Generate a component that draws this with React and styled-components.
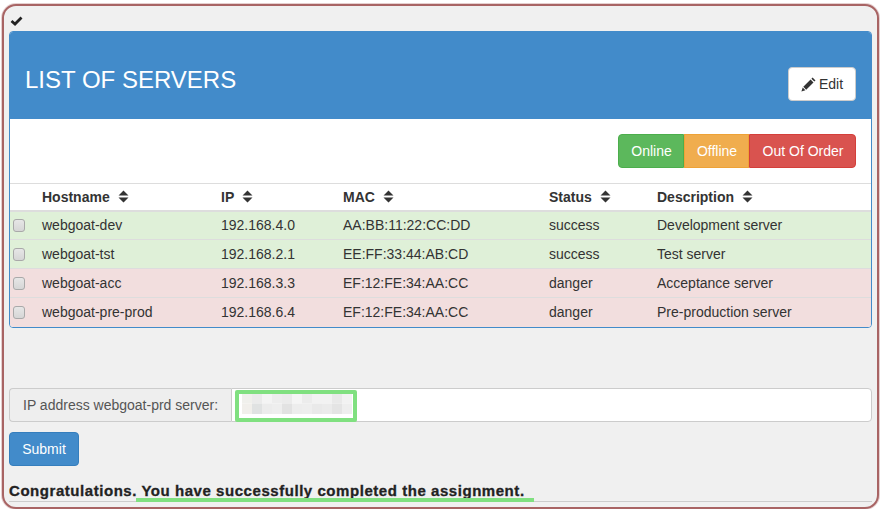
import React from 'react';
import styled, { createGlobalStyle } from 'styled-components';

const GlobalStyle = createGlobalStyle`
  html, body {
    margin: 0;
    padding: 0;
    background: #fff;
  }
  * {
    box-sizing: border-box;
  }
`;

const Frame = styled.div`
  position: relative;
  width: 877px;
  height: 505px;
  margin: 4px 0 0 2px;
  padding: 0 5px;
  border: 2px solid #a86464;
  border-radius: 14px;
  box-shadow: 0 0 0 1px rgba(168, 100, 100, 0.3);
  background: #f0f0f0;
  color: #333;
  font-family: 'Liberation Sans', Arial, sans-serif;
  font-size: 14px;
  line-height: 20px;
`;

const CheckRow = styled.div`
  height: 25px;
  padding: 10px 0 0 1px;
  svg {
    display: block;
  }
`;

const Panel = styled.div`
  background: #fff;
  border: 1px solid #428bca;
  border-radius: 4px;
  overflow: hidden;
`;

const PanelHeader = styled.div`
  display: flex;
  justify-content: space-between;
  align-items: flex-end;
  height: 87px;
  padding: 0 15px 18px 15px;
  background: #428bca;
`;

const Title = styled.h3`
  margin: 0 0 8px;
  color: #fff;
  font-size: 24px;
  font-weight: 400;
  line-height: 26px;
`;

const EditButton = styled.button`
  display: flex;
  align-items: center;
  justify-content: center;
  gap: 3px;
  width: 68px;
  height: 34px;
  padding: 0;
  background: #fff;
  border: 1px solid #ccc;
  border-radius: 4px;
  color: #333;
  font: inherit;
`;

const Toolbar = styled.div`
  display: flex;
  justify-content: flex-end;
  padding: 15px 15px 15px 0;
`;

const FilterButton = styled.button`
  width: ${props => props.$width}px;
  height: 34px;
  padding: 0 0 0 1px;
  background: ${props => props.$color};
  border: 1px solid ${props => props.$edge};
  color: #fff;
  font: inherit;
  &:first-child {
    border-radius: 4px 0 0 4px;
  }
  &:last-child {
    border-radius: 0 4px 4px 0;
  }
`;

const Table = styled.table`
  width: 100%;
  border-collapse: collapse;
  table-layout: fixed;
`;

const HeadCell = styled.th`
  width: ${props => props.$width};
  height: 27px;
  padding: 0 5px;
  border-top: 1px solid #ddd;
  border-bottom: 2px solid #ddd;
  text-align: left;
  font-weight: 700;
  white-space: nowrap;
  svg {
    margin-left: 8px;
    vertical-align: -1px;
  }
`;

const Row = styled.tr`
  background: ${props => (props.$status === 'success' ? '#dff0d8' : '#f2dede')};
`;

const Cell = styled.td`
  height: 29px;
  padding: 0 5px;
  border-top: 1px solid #ddd;
  white-space: nowrap;
`;

const CheckCell = styled(Cell)`
  padding: 0 0 0 3px;
`;

const FakeCheckbox = styled.span`
  display: block;
  width: 12px;
  height: 13px;
  border: 1px solid #a9a9a9;
  border-radius: 3px;
  background: linear-gradient(#e6e6e6, #d6d6d6);
`;

const InputGroup = styled.div`
  display: flex;
  height: 34px;
  margin-top: 60px;
`;

const Addon = styled.span`
  display: flex;
  align-items: center;
  width: 222px;
  padding-left: 13px;
  background: #eee;
  border: 1px solid #ccc;
  border-right: 0;
  border-radius: 4px 0 0 4px;
  color: #555;
`;

const FieldBox = styled.div`
  position: relative;
  flex: 1;
  background: #fff;
  border: 1px solid #ccc;
  border-radius: 0 4px 4px 0;
`;

const Mosaic = styled.svg`
  position: absolute;
  left: 10px;
  top: 4px;
`;

const Highlight = styled.div`
  position: absolute;
  left: 3px;
  top: 1px;
  width: 122px;
  height: 32px;
  border: 4px solid #80e080;
  border-radius: 2px;
`;

const SubmitButton = styled.button`
  display: block;
  width: 70px;
  height: 34px;
  margin-top: 10px;
  padding: 0;
  background: #428bca;
  border: 1px solid #357ebd;
  border-radius: 4px;
  color: #fff;
  font: inherit;
`;

const Message = styled.div`
  position: relative;
  margin-top: 15px;
  height: 21px;
  border-bottom: 1px solid #ccc;
  color: #222;
  font-size: 15px;
  font-weight: 700;
  letter-spacing: 0.55px;
  -webkit-text-stroke: 0.3px #222;
  white-space: nowrap;
`;

const Underline = styled.div`
  position: absolute;
  left: 127px;
  top: 17px;
  width: 398px;
  height: 4px;
  background: #80e080;
`;

const SortIcon = () => (
  <svg width="11" height="13" viewBox="0 0 11 13">
    <path d="M5.5 0.5 L10.5 5.5 H0.5 Z M0.5 7.5 H10.5 L5.5 12.5 Z" fill="#333" />
  </svg>
);

const PencilIcon = () => (
  <svg width="15" height="15" viewBox="0 0 15 15">
    <path
      d="M11.6 0.5 L14.5 3.4 L13.3 4.6 L10.4 1.7 Z M9.6 2.5 L12.5 5.4 L5.2 12.7 L2.3 9.8 Z M1.7 10.6 L4.4 13.3 L0.4 14.6 Z"
      fill="#333"
    />
  </svg>
);

const CheckIcon = () => (
  <svg width="13" height="10" viewBox="0 0 13 10">
    <path d="M1.5 5 L5 8 L11.5 1.5" fill="none" stroke="#222" strokeWidth="2.8" />
  </svg>
);

const columns = [
  { label: 'Hostname', width: '179px' },
  { label: 'IP', width: '122px' },
  { label: 'MAC', width: '206px' },
  { label: 'Status', width: '108px' },
  { label: 'Description', width: 'auto' },
];

const servers = [
  ['webgoat-dev', '192.168.4.0', 'AA:BB:11:22:CC:DD', 'success', 'Development server'],
  ['webgoat-tst', '192.168.2.1', 'EE:FF:33:44:AB:CD', 'success', 'Test server'],
  ['webgoat-acc', '192.168.3.3', 'EF:12:FE:34:AA:CC', 'danger', 'Acceptance server'],
  ['webgoat-pre-prod', '192.168.6.4', 'EF:12:FE:34:AA:CC', 'danger', 'Pre-production server'],
];

const mosaicTop = ['#f0f0ec', '#ebebeb', '#f4f4f4', '#ededed', '#ebebeb', '#f5f5f5', '#ececec', '#f2f2f2', '#f2f2f2', '#e9e9e9', '#f2f2f2'];
const mosaicBottom = ['#f1efeb', '#e0e2e2', '#ececec', '#eeeeee', '#e2e2e2', '#ededed', '#eeeeee', '#e9e9e9', '#ebebeb', '#e4e4e4', '#eeeeee'];

const App = () => {
  return (
    <>
      <GlobalStyle />
      <Frame>
        <CheckRow>
          <CheckIcon />
        </CheckRow>
        <Panel>
          <PanelHeader>
            <Title>LIST OF SERVERS</Title>
            <EditButton>
              <PencilIcon />
              Edit
            </EditButton>
          </PanelHeader>
          <Toolbar>
            <FilterButton $width={66} $color="#5cb85c" $edge="#4cae4c">Online</FilterButton>
            <FilterButton $width={65} $color="#f0ad4e" $edge="#eea236">Offline</FilterButton>
            <FilterButton $width={107} $color="#d9534f" $edge="#d43f3a">Out Of Order</FilterButton>
          </Toolbar>
          <Table>
            <thead>
              <tr>
                <HeadCell $width="27px" />
                {columns.map(col => (
                  <HeadCell key={col.label} $width={col.width}>
                    {col.label}
                    <SortIcon />
                  </HeadCell>
                ))}
              </tr>
            </thead>
            <tbody>
              {servers.map(row => (
                <Row key={row[0]} $status={row[3]}>
                  <CheckCell>
                    <FakeCheckbox />
                  </CheckCell>
                  {row.map((value, i) => (
                    <Cell key={i}>{value}</Cell>
                  ))}
                </Row>
              ))}
            </tbody>
          </Table>
        </Panel>
        <InputGroup>
          <Addon>IP address webgoat-prd server:</Addon>
          <FieldBox>
            <Mosaic width="110" height="21" viewBox="0 0 110 21">
              {mosaicTop.map((c, i) => (
                <rect key={i} x={i * 10} y="0" width="10" height="10.5" fill={c} />
              ))}
              {mosaicBottom.map((c, i) => (
                <rect key={i} x={i * 10} y="10.5" width="10" height="10.5" fill={c} />
              ))}
            </Mosaic>
            <Highlight />
          </FieldBox>
        </InputGroup>
        <SubmitButton>Submit</SubmitButton>
        <Message>
          Congratulations. You have successfully completed the assignment.
          <Underline />
        </Message>
      </Frame>
    </>
  );
};

export default App;
